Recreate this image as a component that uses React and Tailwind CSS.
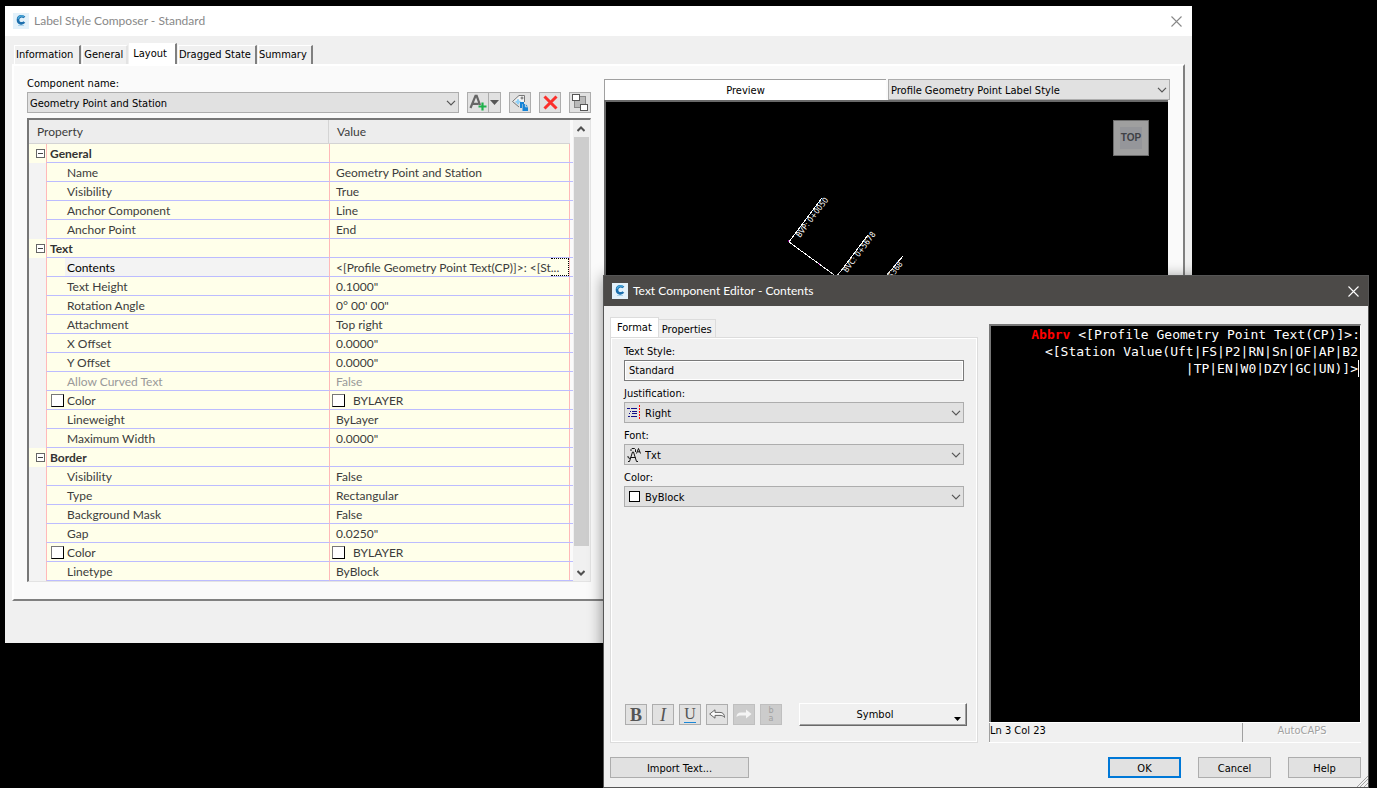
import { useState } from "react";
import clsx from "clsx";

const UI_FONT = "font-['DejaVu_Sans_Condensed','DejaVu_Sans',sans-serif]";
const GRID_FONT = "font-['Lato',sans-serif]";

const GROUPS = [
  {
    title: "General",
    rows: [
      { name: "Name", value: "Geometry Point and Station" },
      { name: "Visibility", value: "True" },
      { name: "Anchor Component", value: "Line" },
      { name: "Anchor Point", value: "End" },
    ],
  },
  {
    title: "Text",
    rows: [
      { name: "Contents", value: "<[Profile Geometry Point Text(CP)]>: <[St...", selected: true },
      { name: "Text Height", value: '0.1000"' },
      { name: "Rotation Angle", value: "0° 00' 00\"" },
      { name: "Attachment", value: "Top right" },
      { name: "X Offset", value: '0.0000"' },
      { name: "Y Offset", value: '0.0000"' },
      { name: "Allow Curved Text", value: "False", disabled: true },
      { name: "Color", value: "BYLAYER", swatch: true },
      { name: "Lineweight", value: "ByLayer" },
      { name: "Maximum Width", value: '0.0000"' },
    ],
  },
  {
    title: "Border",
    rows: [
      { name: "Visibility", value: "False" },
      { name: "Type", value: "Rectangular" },
      { name: "Background Mask", value: "False" },
      { name: "Gap", value: '0.0250"' },
      { name: "Color", value: "BYLAYER", swatch: true },
      { name: "Linetype", value: "ByBlock" },
    ],
  },
];

const COMPOSER_TABS = ["Information", "General", "Layout", "Dragged State", "Summary"];

function AppIcon() {
  return (
    <svg className="size-4 shrink-0" viewBox="0 0 16 16" aria-hidden="true">
      <rect width="16" height="16" fill="#e3f1fa" />
      <path d="M11.3 4.6C10 2.700 5.200 2.600 5 6.600c-.2 4 4.300 4.700 6.300 2.400" fill="none" stroke="#1b6fae" strokeWidth="2.600" />
      <path d="M10.800 3.600C9 2 5.400 3 5 6" fill="none" stroke="#4fb0e0" strokeWidth="1.200" />
      <path d="M5 12.500h6" stroke="#a9d3ec" strokeWidth="1" />
    </svg>
  );
}

function Chevron({ className }) {
  return (
    <svg className={clsx("h-[6px] w-[10px]", className)} viewBox="0 0 10 6" fill="none" stroke="#555" strokeWidth="1.2" aria-hidden="true">
      <path d="M1 0.800l4 4 4-4" />
    </svg>
  );
}

function CloseIcon({ color }) {
  return (
    <svg className="size-[11px]" viewBox="0 0 11 11" stroke={color} strokeWidth="1.1" aria-hidden="true">
      <path d="M0.500 0.500l10 10M10.500 0.500l-10 10" />
    </svg>
  );
}

function Select({ id, label, value, icon, className }) {
  return (
    <div className={clsx("relative min-w-0", className)}>
      <select
        id={id}
        aria-label={label}
        className={clsx(
          "block h-[21px] w-full appearance-none border border-[#adadad] bg-[#e1e1e1] pt-0.5 pr-5 text-black outline-none",
          icon ? "pl-5" : "pl-0.5"
        )}
      >
        <option>{value}</option>
      </select>
      {icon && <span className="pointer-events-none absolute inset-y-0 left-[3px] flex items-center">{icon}</span>}
      <Chevron className="pointer-events-none absolute top-2 right-[3px]" />
    </div>
  );
}

function ToolButton({ label, disabled, children, width = "w-[22px]" }) {
  return (
    <button
      type="button"
      aria-label={label}
      disabled={disabled}
      className={clsx(
        "flex h-[21px] items-center justify-center border",
        width,
        disabled ? "border-[#bfbfbf] bg-[#cccccc]" : "border-[#adadad] bg-[#e1e1e1]"
      )}
    >
      {children}
    </button>
  );
}

function PushButton({ children, primary, className }) {
  return (
    <button
      type="button"
      className={clsx(
        "h-[21px] bg-[#e1e1e1] pt-0.5 text-black",
        primary ? "border-2 border-[#0078d7]" : "border border-[#adadad]",
        className
      )}
    >
      {children}
    </button>
  );
}

function Swatch() {
  return <span className="block size-[13px] shrink-0 border border-t-[#777] border-r-black border-b-black border-l-[#777] bg-white" />;
}

function ComponentToolbar() {
  return (
    <div className="flex h-[22px] items-end gap-2">
      <Select id="component-name" value="Geometry Point and Station" className="flex-1" />
      <div className="flex">
        <ToolButton label="Create text component">
          <svg className="h-[18px] w-5 shrink-0" viewBox="0 0 20 18" aria-hidden="true">
            <path d="M2.500 14L7.500 1.800h1.200L12 11M4.500 9.800h6" fill="none" stroke="#666" strokeWidth="2.200" />
            <path d="M14.500 8.500v8M10.500 12.500h8" stroke="#1fb14c" strokeWidth="2.200" />
          </svg>
        </ToolButton>
        <div className="-ml-px">
          <ToolButton label="Component types" width="w-[13px]">
            <svg className="h-[5px] w-[9px] shrink-0" viewBox="0 0 9 5" aria-hidden="true">
              <path d="M0 0h9L4.500 5z" fill="#555" />
            </svg>
          </ToolButton>
        </div>
      </div>
      <ToolButton label="Copy component">
        <svg className="size-[18px] shrink-0" viewBox="0 0 18 18" aria-hidden="true">
          <path d="M1.500 7.500L8 1.500h5.500V8M1.500 7.500L8 13" fill="#f4f4f4" stroke="#777" strokeWidth="1" />
          <circle cx="11" cy="4" r="1" fill="none" stroke="#666" />
          <path d="M7 5.200v5M4.500 7.700h5" stroke="#8fd0f7" strokeWidth="2" />
          <path d="M9 8h4v2H11v4H9zM11.500 10h3l2.500 2.500v4.500h-5.500z" fill="#1583d6" />
          <path d="M14.400 10v2.800h2.800" fill="none" stroke="#e1e1e1" strokeWidth="0.900" />
        </svg>
      </ToolButton>
      <ToolButton label="Delete component">
        <svg className="size-[15px] shrink-0" viewBox="0 0 15 15" aria-hidden="true">
          <path d="M1.500 1.500l12 12M13.500 1.500l-12 12" stroke="#fb2f2b" strokeWidth="3" />
        </svg>
      </ToolButton>
      <ToolButton label="Component draw order">
        <svg className="h-[17px] w-4 shrink-0" viewBox="0 0 16 17" aria-hidden="true">
          <rect x="2.500" y="2.500" width="11" height="11" fill="#b9b9b9" stroke="#888" />
          <rect x="0.500" y="0.500" width="7" height="6" fill="#fff" stroke="#555" />
          <rect x="8.500" y="10.500" width="7" height="6" fill="#fff" stroke="#555" />
        </svg>
      </ToolButton>
    </div>
  );
}

function PropertyRow({ row }) {
  const color = row.disabled ? "text-[#999]" : "text-[#3c3c3c]";
  return (
    <tr className="h-[19px]">
      <td className="bg-[#f3f3f3] p-0" />
      <td
        className={clsx(
          "border-b border-l border-b-[#bcbcff] border-l-[#ffb9b9] p-0",
          row.selected ? "bg-[linear-gradient(to_right,#ffffea_18px,#f3f3f3_18px)]" : "bg-[#ffffea]"
        )}
      >
        <span className={clsx("flex h-[18px] items-center pt-px pl-1", row.selected ? "text-black" : color)}>
          <span className="w-4">{row.swatch && <Swatch />}</span>
          {row.name}
        </span>
      </td>
      <td className="border-b border-l border-b-[#bcbcff] border-l-[#ffb9b9] bg-[#ffffea] p-0">
        <span
          className={clsx(
            "relative flex h-[18px] items-center border-r border-[#ffb9b9] pt-px whitespace-nowrap",
            color,
            row.swatch ? "gap-2 pl-0.5" : "pl-1.5"
          )}
        >
          {row.swatch && <Swatch />}
          {row.value}
          {row.selected && (
            <span className="absolute inset-y-0 right-0 w-[18px] border border-l-0 border-dotted border-black" />
          )}
        </span>
      </td>
      <td className="border-b border-[#bcbcff] bg-[#fafafa] p-0" />
    </tr>
  );
}

function PropertyGroup({ group }) {
  const [open, setOpen] = useState(true);
  return (
    <tbody>
      <tr className="h-[19px]">
        <td className="bg-[#ffffea] p-0">
          <button
            type="button"
            aria-label={`Toggle ${group.title}`}
            aria-expanded={open}
            onClick={() => setOpen(!open)}
            className="ml-[7px] flex size-[9px] items-center justify-center border border-[#666] bg-white"
          >
            <span className="h-px w-[5px] bg-[#444]" />
          </button>
        </td>
        <th scope="rowgroup" className="border-b border-l border-b-[#bcbcff] border-l-[#ffb9b9] bg-[#ffffea] p-0 text-left text-[#333]">
          <span className="flex h-[18px] items-center pt-px pl-[3px] font-bold">{group.title}</span>
        </th>
        <td className="border-b border-l border-b-[#bcbcff] border-l-[#ffb9b9] bg-[#ffffea] p-0">
          <span className="block h-[18px] border-r border-[#ffb9b9]" />
        </td>
        <td className="border-b border-[#bcbcff] bg-[#fafafa] p-0" />
      </tr>
      {open && group.rows.map((row) => <PropertyRow key={row.name} row={row} />)}
    </tbody>
  );
}

function PropertyGrid() {
  return (
    <div className={clsx("mt-[5px] flex border-t-2 border-r border-b border-l-2 border-t-[#777] border-r-[#e3e3e3] border-b-[#e3e3e3] border-l-[#777] bg-[#f0f0f0] text-[12px] leading-[18px]", GRID_FONT)}>
      <div className="min-w-0 flex-1">
        <table className="w-full table-fixed border-separate border-spacing-0">
          <colgroup>
            <col className="w-[17px]" />
            <col className="w-[283px]" />
            <col />
            <col className="w-[3px]" />
          </colgroup>
          <thead>
            <tr className="h-6 bg-[#ededed] text-left text-[#3c3c3c]">
              <th colSpan={2} className="border-r border-b border-[#d4d4d4] p-0 pt-px pl-2 font-normal">Property</th>
              <th className="border-b border-[#d4d4d4] p-0 pt-px pl-2 font-normal">Value</th>
              <th className="bg-[#fafafa] p-0" />
            </tr>
          </thead>
          {GROUPS.map((group) => (
            <PropertyGroup key={group.title} group={group} />
          ))}
        </table>
      </div>
      <div className="flex w-[17px] flex-col items-center bg-[#f0f0f0] pr-px">
        <button type="button" aria-label="Scroll up" className="flex h-[17px] w-full items-center justify-center">
          <svg className="h-[6px] w-[8px]" viewBox="0 0 8 6" fill="none" stroke="#505050" strokeWidth="2" aria-hidden="true">
            <path d="M0.500 5L4 1.500 7.500 5" />
          </svg>
        </button>
        <div className="mb-[18px] w-[15px] flex-1 bg-[#cdcdcd]" />
        <button type="button" aria-label="Scroll down" className="flex h-[17px] w-full items-center justify-center">
          <svg className="h-[6px] w-[8px]" viewBox="0 0 8 6" fill="none" stroke="#505050" strokeWidth="2" aria-hidden="true">
            <path d="M0.500 1L4 4.500 7.500 1" />
          </svg>
        </button>
      </div>
    </div>
  );
}

function Preview() {
  return (
    <div className="mt-1 flex min-w-0 flex-1 flex-col">
      <div className="grid grid-cols-2 gap-0.5">
        <div className="flex h-[21px] items-center justify-center border-t border-l border-[#a0a0a0] bg-white pt-px">Preview</div>
        <Select label="Preview label style" value="Profile Geometry Point Label Style" />
      </div>
      <div className="relative mr-0.5 flex-1 overflow-hidden border-t-2 border-l-2 border-[#696969] bg-black">
        <svg className="absolute inset-0 size-full" aria-hidden="true">
          <g stroke="#fff" strokeWidth="1" fill="none" shapeRendering="crispEdges">
            <path d="M183 140L216 96M183 140L231 175M231 174L262 133M280 174L297 154" />
          </g>
          <path d="M182 139h1M213 162h1" stroke="#f0f" />
          <g fill="#fff" fontSize="8" fontFamily="'DejaVu Sans Condensed', 'DejaVu Sans', sans-serif">
            <text transform="translate(194 136) rotate(-53)">BVP: 0+0050</text>
            <text transform="translate(241 171) rotate(-53)">BVC: 0+5678</text>
            <text transform="translate(270 198) rotate(-53)">PVI: 0+5368</text>
          </g>
        </svg>
        <button
          type="button"
          className="absolute top-[18px] right-[19px] flex size-9 items-center justify-center border border-[#6b6b6b] bg-[#9f9f9f] font-['Liberation_Sans_Narrow','Liberation_Sans',sans-serif] text-[10px] font-bold text-[#3f4146]"
        >
          <span className="flex size-[22px] items-center justify-center bg-[#95969a]">TOP</span>
        </button>
      </div>
    </div>
  );
}

function StyleComposer() {
  return (
    <section className="mr-[185px] ml-[5px] bg-[#f0f0f0] pb-[42px]">
      <header className={clsx("flex h-[30px] items-center bg-white pr-[10px] pl-2 text-[12px] text-[#888]", GRID_FONT)}>
        <AppIcon />
        <h1 className="ml-[5px] flex-1">Label Style Composer - Standard</h1>
        <button type="button" aria-label="Close">
          <CloseIcon color="#888" />
        </button>
      </header>
      <nav className="flex h-7 items-end px-[9px]" role="tablist">
        {COMPOSER_TABS.map((tab) => (
          <button
            key={tab}
            type="button"
            role="tab"
            aria-selected={tab === "Layout"}
            className={clsx(
              "mr-px border-t border-r-2 border-l border-t-white border-l-white",
              tab === "Layout" ? "h-[21px] bg-white pr-2 pl-[3px]" : "h-[19px]",
              tab === "Information" && "pr-1.5 pl-px",
              tab === "General" ? "border-r-[#e3e3e3] pr-[3px] pl-px" : "border-r-[#808080]",
              (tab === "Dragged State" || tab === "Summary") && "pr-1"
            )}
          >
            {tab}
          </button>
        ))}
      </nav>
      <div className="mx-[7px] flex gap-[13px] border-2 border-t-white border-r-[#808080] border-b-[#808080] border-l-white bg-[#fafafa] pr-[13px] pb-[17px] pl-[13px]">
        <div className="w-[564px] shrink-0 pt-[9px]">
          <label htmlFor="component-name" className="block h-4 leading-[18px]">Component name:</label>
          <ComponentToolbar />
          <PropertyGrid />
        </div>
        <div className="flex min-w-0 flex-1 pt-[9px]">
          <Preview />
        </div>
      </div>
    </section>
  );
}

function JustifyIcon() {
  return (
    <svg className="h-[15px] w-[14px]" viewBox="0 0 14 15" aria-hidden="true">
      <path d="M0 3.500h3M4 3.500h6M3 6.500h1M5 6.500h5M2 8.500h1M5 8.500h5M1 11.500h2M4 11.500h6" stroke="#10108a" />
      <path d="M12.500 0v15" stroke="#f00" strokeDasharray="2 1" />
    </svg>
  );
}

function FontIcon() {
  return (
    <svg className="h-[14px] w-[14px]" viewBox="0 0 14 14" fill="none" stroke="#111" strokeWidth="1" aria-hidden="true">
      <path d="M1 13.500h1.500L5.500 4h1l3 9.500H11M1 8v1.500l2 1M3.500 9.500h5M4 3V1.500L5 0.500h2.500l1 1V4" />
      <path d="M9.500 5.500l2-5 2 5M10.500 3.800h2.500" />
    </svg>
  );
}

function Field({ id, label, children }) {
  return (
    <div>
      <label htmlFor={id} className="mb-px block h-4 leading-[18px]">{label}</label>
      {children}
    </div>
  );
}

function FormatPanel() {
  return (
    <div className="flex w-[368px] shrink-0 flex-col">
      <div className="flex h-5 items-end" role="tablist">
        <button type="button" role="tab" aria-selected="true" className="h-5 border border-b-0 border-[#dcdcdc] bg-white px-1.5">Format</button>
        <button type="button" role="tab" aria-selected="false" className="h-[18px] border border-b-0 border-l-0 border-[#dcdcdc] px-[3px] pt-0.5">Properties</button>
      </div>
      <div className="flex flex-1 flex-col border border-[#dcdcdc] pt-[5px] pb-4 shadow-[inset_0_0_0_1px_#fff]">
        <div className="flex flex-col gap-1 px-[13px]">
          <Field id="text-style" label="Text Style:">
            <input id="text-style" readOnly value="Standard" className="block h-[21px] w-full border border-[#7a7a7a] bg-[#f0f0f0] px-1 outline-1 -outline-offset-2 outline-white" />
          </Field>
          <Field id="justification" label="Justification:">
            <Select id="justification" value="Right" icon={<JustifyIcon />} />
          </Field>
          <Field id="font" label="Font:">
            <Select id="font" value="Txt" icon={<FontIcon />} />
          </Field>
          <Field id="color" label="Color:">
            <Select id="color" value="ByBlock" icon={<span className="ml-0.5 block size-[11px] border border-black bg-white" />} />
          </Field>
        </div>
        <div className="mt-auto flex items-center gap-[5px] pr-[10px] pl-[14px] font-['Liberation_Serif',serif] text-[18px] leading-4 text-[#555]">
          <ToolButton label="Bold"><b>B</b></ToolButton>
          <ToolButton label="Italic"><i>I</i></ToolButton>
          <ToolButton label="Underline">
            <span className="h-[17px] border-b border-[#1b87d6] text-[16px] leading-4">U</span>
          </ToolButton>
          <ToolButton label="Undo">
            <svg className="h-3 w-4 shrink-0" viewBox="0 0 16 12" fill="#fafafa" stroke="#666" aria-hidden="true">
              <path d="M0.700 5L6 0.800V3.400h5c3 0 4.500 2 4.500 5-1.500-1.800-3-2-4.500-2H6v2.800z" />
            </svg>
          </ToolButton>
          <ToolButton label="Redo" disabled>
            <svg className="h-3 w-4 shrink-0" viewBox="0 0 16 12" fill="#f4f4f4" aria-hidden="true">
              <path d="M15.500 5L10 0.500V3.400H5C2 3.400 0.500 5 0.500 8c1.500-1.300 3-1.500 4.500-1.500h5v3z" />
            </svg>
          </ToolButton>
          <ToolButton label="Stack" disabled>
            <span className="flex flex-col items-center font-['DejaVu_Sans',sans-serif] text-[8px] leading-2 text-[#a0a0a0]">
              <span>b</span>
              <span>a</span>
            </span>
          </ToolButton>
          <button
            type="button"
            className={clsx("relative ml-3 h-[23px] flex-1 border border-t-white border-r-[#696969] border-b-[#696969] border-l-white bg-[#f0f0f0] pr-4 text-[11px] text-black shadow-[inset_-1px_-1px_#a0a0a0]", UI_FONT)}
          >
            Symbol
            <svg className="absolute right-[5px] bottom-1 h-1 w-[7px]" viewBox="0 0 7 4" aria-hidden="true">
              <path d="M0 0h7L3.500 4z" />
            </svg>
          </button>
        </div>
      </div>
    </div>
  );
}

function ContentsPane() {
  return (
    <div className="mt-[7px] flex min-w-0 flex-1 flex-col">
      <div
        role="textbox"
        aria-label="Contents"
        aria-multiline="true"
        contentEditable
        suppressContentEditableWarning
        className="flex-1 overflow-hidden border-t-2 border-r border-l-2 border-t-[#777] border-r-white border-l-[#777] bg-black text-right font-['DejaVu_Sans_Mono',monospace] text-[13px] leading-[17px] whitespace-pre text-white outline-none"
      >
        <div>
          <b className="text-[#f00]">Abbrv</b>{" <[Profile Geometry Point Text(CP)]>:"}
        </div>
        <div className="pr-0.5">{"<[Station Value(Uft|FS|P2|RN|Sn|OF|AP|B2"}</div>
        <div className="flex justify-end pr-px">
          <span className="border-r border-white">{"|TP|EN|W0|DZY|GC|UN)]>"}</span>
        </div>
      </div>
      <div className="flex h-[21px] border-t border-b border-white">
        <div className="flex-1 border-l border-[#a0a0a0]">Ln 3 Col 23</div>
        <div className="w-[119px] border-l border-[#a0a0a0] text-center text-[#a0a0a0] [text-shadow:1px_1px_#fff]">AutoCAPS</div>
      </div>
    </div>
  );
}

function TextComponentEditor() {
  return (
    <section className="absolute top-[275px] right-[8px] bottom-0 left-[603px] flex flex-col border border-[#555] bg-[#f0f0f0] shadow-[0_2px_14px_rgba(0,0,0,0.45)]">
      <header className={clsx("flex h-[30px] shrink-0 items-center bg-[#4c4a48] pr-[9px] pl-2 text-[12px] text-white", GRID_FONT)}>
        <AppIcon />
        <h2 className="ml-[5px] flex-1">Text Component Editor - Contents</h2>
        <button type="button" aria-label="Close">
          <CloseIcon color="#fff" />
        </button>
      </header>
      <div className="flex flex-1 flex-col pt-[11px] pr-[7px] pb-[9px] pl-1.5">
        <div className="flex flex-1 gap-[11px]">
          <FormatPanel />
          <ContentsPane />
        </div>
        <footer className="mt-[14px] flex gap-[17px]">
          <PushButton className="mr-auto w-[139px]">Import Text...</PushButton>
          <PushButton primary className="w-[73px]">OK</PushButton>
          <PushButton className="w-[73px]">Cancel</PushButton>
          <PushButton className="w-[73px]">Help</PushButton>
        </footer>
      </div>
      <svg className="pointer-events-none absolute right-0 bottom-0 size-3" viewBox="0 0 12 12" stroke="#a0a0a0" aria-hidden="true">
        <path d="M1 12L12 1M4 12l8-8M8 12l4-4" />
      </svg>
    </section>
  );
}

export default function App() {
  return (
    <main className={clsx("relative min-h-screen overflow-hidden bg-black pt-[6px] text-[11px] leading-4 text-black", UI_FONT)}>
      <StyleComposer />
      <TextComponentEditor />
    </main>
  );
}
